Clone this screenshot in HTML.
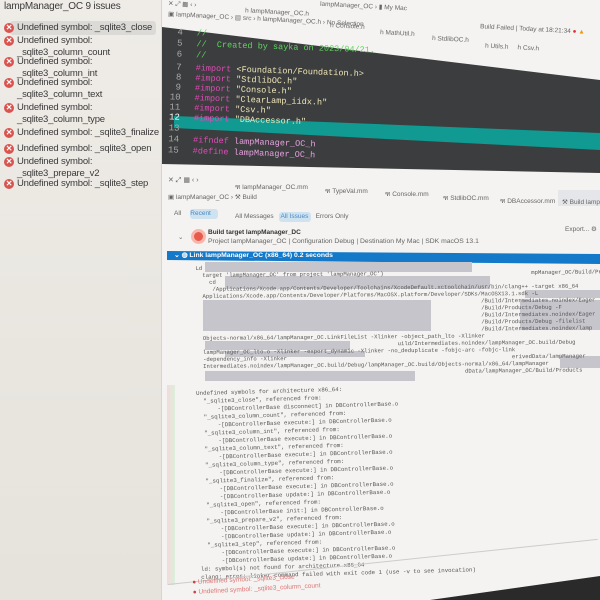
<!DOCTYPE html>
<html><head><meta charset="utf-8"><style>
*{margin:0;padding:0;box-sizing:border-box}
body{width:600px;height:600px;overflow:hidden;position:relative;background:#ebe8e2;font-family:"Liberation Sans",sans-serif}
.abs{position:absolute}
.side{left:0;top:0;width:162px;height:600px;background:linear-gradient(180deg,#efece7,#e9e6e0 60%,#e6e2dc)}
.it{position:absolute;left:4px;font-size:9.5px;letter-spacing:-0.2px;color:#3a3a3a;line-height:12px;white-space:nowrap}
.it i{position:absolute;left:0;top:1px;width:10px;height:10px;border-radius:50%;background:#d9534f;color:#fff;font-style:normal;font-size:8px;line-height:10px;text-align:center;font-weight:bold}
.it span{display:block;margin-left:13px}
.right{left:162px;top:0;width:438px;height:600px;background:#f4f3f1}
.clip{position:absolute;left:162px;top:0;width:438px;height:600px;overflow:hidden}
.clip>*{margin-left:-162px}
.ed{left:162px;top:0;width:438px;height:200px;background:#3c3d3e;clip-path:polygon(0 27px,438px 80px,438px 173px,0 164px)}
.code{position:absolute;left:162px;top:0;width:430px;transform-origin:0 0;transform:rotate(2deg);font-family:"Liberation Mono",monospace;font-size:8.5px}
.ln{position:absolute;left:8px;width:14px;text-align:right;color:#aaa;font-size:9px}
.cl{position:absolute;left:36px;white-space:pre;color:#eee}
.cm{color:#5fd35f}.kw{color:#e24bb8}.st{color:#efe6b8}.mc{color:#e8a0e0}
.log{font-family:"Liberation Mono",monospace;font-size:5.6px;color:#555;white-space:pre;position:absolute;line-height:7px}
.g{position:absolute;background:#c6c5cb}
.tab{position:absolute;font-size:6.5px;color:#666;white-space:nowrap}
</style></head><body>
<div class="abs right"></div>
<div class="abs side"></div>
<div class="abs" style="left:161px;top:0;width:1px;height:600px;background:#d8d5d0"></div>
<div class="it" style="top:1px;font-size:10px"><span style="margin-left:0">lampManager_OC 9 issues</span></div>
<div class="abs" style="left:10px;top:21px;width:146px;height:14px;background:#dcdad7;border-radius:3px"></div>
<div class="it" style="top:22px"><i>✕</i><span>Undefined symbol: _sqlite3_close</span></div>
<div class="it" style="top:35px"><i>✕</i><span>Undefined symbol:<br>_sqlite3_column_count</span></div>
<div class="it" style="top:56px"><i>✕</i><span>Undefined symbol:<br>_sqlite3_column_int</span></div>
<div class="it" style="top:77px"><i>✕</i><span>Undefined symbol:<br>_sqlite3_column_text</span></div>
<div class="it" style="top:102px"><i>✕</i><span>Undefined symbol:<br>_sqlite3_column_type</span></div>
<div class="it" style="top:127px"><i>✕</i><span>Undefined symbol: _sqlite3_finalize</span></div>
<div class="it" style="top:143px"><i>✕</i><span>Undefined symbol: _sqlite3_open</span></div>
<div class="it" style="top:156px"><i>✕</i><span>Undefined symbol:<br>_sqlite3_prepare_v2</span></div>
<div class="it" style="top:178px"><i>✕</i><span>Undefined symbol: _sqlite3_step</span></div>

<div class="clip">
<div class="tab" style="left:168px;top:0px;transform:rotate(3deg)">✕ ⤢ ▦ ‹ ›</div>
<div class="tab" style="left:245px;top:9px;transform:rotate(3deg)">h lampManager_OC.h</div>
<div class="tab" style="left:168px;top:15px;transform:rotate(3deg)">▣ lampManager_OC › ▤ src › h lampManager_OC.h › No Selection</div>
<div class="tab" style="left:320px;top:2px;transform:rotate(3deg)">lampManager_OC › ▮ My Mac</div>
<div class="tab" style="left:330px;top:23px;transform:rotate(3deg)">h Console.h</div>
<div class="tab" style="left:380px;top:30px;transform:rotate(3deg)">h MathUtil.h</div>
<div class="tab" style="left:432px;top:36px;transform:rotate(3deg)">h StdlibOC.h</div>
<div class="tab" style="left:480px;top:26px;transform:rotate(3deg)">Build Failed | Today at 18:21:34 <span style="color:#d33">●</span> <span style="color:#e90">▲</span></div>
<div class="tab" style="left:485px;top:44px;transform:rotate(3deg)">h Utils.h &nbsp;&nbsp;&nbsp; h Csv.h</div>

<div class="abs ed"></div>
<div class="abs" style="left:162px;top:0;width:438px;height:200px;background:#109a92;clip-path:polygon(12px 116px,438px 133px,438px 150px,12px 128px)"></div>
<div class="code">
<div class="ln" style="top:27px">4</div><div class="cl cm" style="top:27px">//</div>
<div class="ln" style="top:38px">5</div><div class="cl cm" style="top:38px">//  Created by sayka on 2023/04/21.</div>
<div class="ln" style="top:49px">6</div><div class="cl cm" style="top:49px">//</div>
<div class="ln" style="top:62px">7</div><div class="cl" style="top:62px"><span class="kw">#import</span> <span class="st">&lt;Foundation/Foundation.h&gt;</span></div>
<div class="ln" style="top:72px">8</div><div class="cl" style="top:72px"><span class="kw">#import</span> <span class="st">"StdlibOC.h"</span></div>
<div class="ln" style="top:82px">9</div><div class="cl" style="top:82px"><span class="kw">#import</span> <span class="st">"Console.h"</span></div>
<div class="ln" style="top:92px">10</div><div class="cl" style="top:92px"><span class="kw">#import</span> <span class="st">"ClearLamp_iidx.h"</span></div>
<div class="ln" style="top:102px">11</div><div class="cl" style="top:102px"><span class="kw">#import</span> <span class="st">"Csv.h"</span></div>
<div class="ln" style="top:112px;color:#fff">12</div><div class="cl" style="top:112px"><span class="kw">#import</span> <span class="st">"DBAccessor.h"</span></div>
<div class="ln" style="top:123px">13</div>
<div class="ln" style="top:134px">14</div><div class="cl" style="top:134px"><span class="kw">#ifndef</span> <span class="mc">lampManager_OC_h</span></div>
<div class="ln" style="top:145px">15</div><div class="cl" style="top:145px"><span class="kw">#define</span> <span class="mc">lampManager_OC_h</span></div>
</div>

<div class="tab" style="left:168px;top:176px;font-size:7px">✕ ⤢ ▦ ‹ ›</div>
<div class="tab" style="left:235px;top:182px">ฑ lampManager_OC.mm</div>
<div class="tab" style="left:325px;top:186px">ฑ TypeVal.mm</div>
<div class="tab" style="left:385px;top:189px">ฑ Console.mm</div>
<div class="tab" style="left:443px;top:193px">ฑ StdlibOC.mm</div>
<div class="tab" style="left:500px;top:196px">ฑ DBAccessor.mm</div>
<div class="abs" style="left:558px;top:190px;width:42px;height:16px;background:#e4e6ea"></div>
<div class="tab" style="left:562px;top:198px">⚒ Build lamp</div>
<div class="tab" style="left:168px;top:193px">▣ lampManager_OC › ⚒ Build</div>
<div class="abs" style="left:190px;top:209px;width:28px;height:10px;background:#cfe2f0;border-radius:3px"></div>
<div class="tab" style="left:174px;top:210px">All &nbsp;&nbsp;&nbsp; <span style="color:#4a8ac0">Recent</span></div>
<div class="abs" style="left:279px;top:212px;width:32px;height:10px;background:#cfe2f0;border-radius:3px"></div>
<div class="tab" style="left:235px;top:213px">All Messages &nbsp;&nbsp; <span style="color:#4a8ac0">All Issues</span> &nbsp;&nbsp; Errors Only</div>
<div class="tab" style="left:565px;top:225px">Export... ⚙</div>
<div class="abs" style="left:191px;top:229px;width:15px;height:15px;border-radius:50%;background:#e85a4a;border:3px solid #f6b8ae"></div>
<div class="tab" style="left:178px;top:233px">⌄</div>
<div class="tab" style="left:208px;top:229px;color:#333;font-weight:bold">Build target lampManager_DC</div>
<div class="tab" style="left:208px;top:238px;font-size:6.8px">Project lampManager_OC | Configuration Debug | Destination My Mac | SDK macOS 13.1</div>
<div class="abs" style="left:167px;top:0;width:433px;height:300px;background:#1479c8;clip-path:polygon(0 251px,433px 254px,433px 264px,0 260px)"></div>
<div class="tab" style="left:174px;top:251px;color:#fff;font-weight:bold;font-size:6.8px">⌄ ◍ Link lampManager_OC (x86_64) 0.2 seconds</div>

<div class="g" style="left:205px;top:262px;width:267px;height:10px"></div>
<div class="g" style="left:225px;top:276px;width:265px;height:13px"></div>
<div class="g" style="left:525px;top:290px;width:75px;height:8px"></div>
<div class="g" style="left:203px;top:300px;width:228px;height:31px"></div>
<div class="g" style="left:520px;top:300px;width:80px;height:30px"></div>
<div class="g" style="left:205px;top:341px;width:145px;height:9px"></div>
<div class="g" style="left:225px;top:351px;width:140px;height:6px"></div>
<div class="g" style="left:560px;top:356px;width:40px;height:12px"></div>
<div class="g" style="left:205px;top:371px;width:210px;height:10px"></div>

<div class="log" style="left:196px;top:263px;transform:rotate(-0.5deg)">Ld
  target 'lampManager_OC' from project 'lampManager_OC')                                            mpManager_OC/Build/Products/Debug
    cd
     /Applications/Xcode.app/Contents/Developer/Toolchains/XcodeDefault.xctoolchain/usr/bin/clang++ -target x86_64
  Applications/Xcode.app/Contents/Developer/Platforms/MacOSX.platform/Developer/SDKs/MacOSX13.1.sdk -L
                                                                                     /Build/Intermediates.noindex/Eager
                                                                                     /Build/Products/Debug -F
                                                                                     /Build/Intermediates.noindex/Eager
                                                                                     /Build/Products/Debug -filelist
                                                                                     /Build/Intermediates.noindex/lamp
  Objects-normal/x86_64/lampManager_OC.LinkFileList -Xlinker -object_path_lto -Xlinker
                                                            uild/Intermediates.noindex/lampManager_OC.build/Debug
  lampManager_OC_lto.o -Xlinker -export_dynamic -Xlinker -no_deduplicate -fobjc-arc -fobjc-link
  -dependency_info -Xlinker                                                                   erivedData/lampManager
  Intermediates.noindex/lampManager_OC.build/Debug/lampManager_OC.build/Objects-normal/x86_64/lampManager
                                                                                dData/lampManager_OC/Build/Products</div>

<div class="abs" style="left:167px;top:385px;width:8px;height:200px;background:linear-gradient(90deg,#f3dada,#dcefdc)"></div>
<div class="log" style="left:196px;top:390px;line-height:8px;font-size:5.8px;color:#555;transform:rotate(-1.6deg);transform-origin:0 0">Undefined symbols for architecture x86_64:
  "_sqlite3_close", referenced from:
      -[DBControllerBase disconnect] in DBControllerBase.o
  "_sqlite3_column_count", referenced from:
      -[DBControllerBase execute:] in DBControllerBase.o
  "_sqlite3_column_int", referenced from:
      -[DBControllerBase execute:] in DBControllerBase.o
  "_sqlite3_column_text", referenced from:
      -[DBControllerBase execute:] in DBControllerBase.o
  "_sqlite3_column_type", referenced from:
      -[DBControllerBase execute:] in DBControllerBase.o
  "_sqlite3_finalize", referenced from:
      -[DBControllerBase execute:] in DBControllerBase.o
      -[DBControllerBase update:] in DBControllerBase.o
  "_sqlite3_open", referenced from:
      -[DBControllerBase init:] in DBControllerBase.o
  "_sqlite3_prepare_v2", referenced from:
      -[DBControllerBase execute:] in DBControllerBase.o
      -[DBControllerBase update:] in DBControllerBase.o
  "_sqlite3_step", referenced from:
      -[DBControllerBase execute:] in DBControllerBase.o
      -[DBControllerBase update:] in DBControllerBase.o
ld: symbol(s) not found for architecture x86_64
clang: error: linker command failed with exit code 1 (use -v to see invocation)</div>
<div class="abs" style="left:168px;top:584px;width:432px;height:1px;background:#ccc;transform-origin:0 0;transform:rotate(-6deg)"></div>
<div class="log" style="left:192px;top:578px;font-family:'Liberation Sans',sans-serif;font-size:6.5px;color:#d77;line-height:10px;transform:rotate(-3deg);transform-origin:0 0"><span style="color:#c44">●</span> Undefined symbol: _sqlite3_close
<span style="color:#c44">●</span> Undefined symbol: _sqlite3_column_count</div>
<div class="abs" style="left:420px;top:570px;width:180px;height:30px;background:#2a2a2a;clip-path:polygon(10px 30px,180px 6px,180px 30px)"></div>
</div>
</body></html>
